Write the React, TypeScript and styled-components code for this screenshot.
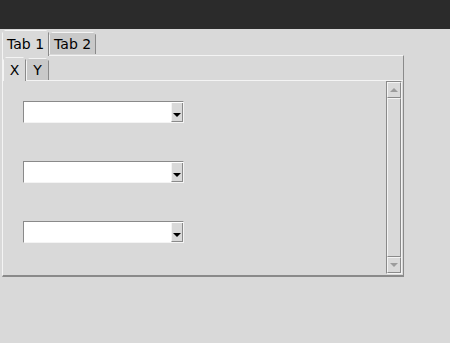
import { useState } from "react";
import { createGlobalStyle, styled } from "styled-components";

const GlobalStyle = createGlobalStyle`
  html, body {
    margin: 0;
    padding: 0;
    background: #d9d9d9;
    font-family: "DejaVu Sans", "Liberation Sans", sans-serif;
  }
`;

const outerTabs = ["Tab 1", "Tab 2"];
const innerTabs = ["X", "Y"];
const choices = [0, 1, 2];

export default function App() {
  const [outer, setOuter] = useState(0);
  const [inner, setInner] = useState(0);

  return (
    <>
      <GlobalStyle />
      <TitleBar />
      <Window>
        <TabBar>
          {outerTabs.map((t, i) => (
            <Tab key={t} $active={i === outer} onClick={() => setOuter(i)}>
              {t}
            </Tab>
          ))}
        </TabBar>
        <Panel>
          <InnerTabBar>
            {innerTabs.map((t, i) => (
              <InnerTab key={t} $active={i === inner} onClick={() => setInner(i)}>
                {t}
              </InnerTab>
            ))}
          </InnerTabBar>
          <InnerPanel>
            <ChoiceList>
              {choices.map((c) => (
                <Choice key={c}>
                  <ChoiceField />
                  <ChoiceButton>
                    <DownArrow />
                  </ChoiceButton>
                </Choice>
              ))}
            </ChoiceList>
            <Scrollbar>
              <ScrollButton>
                <ArrowUp />
              </ScrollButton>
              <ScrollTrack />
              <ScrollButton>
                <ArrowDown />
              </ScrollButton>
            </Scrollbar>
          </InnerPanel>
        </Panel>
      </Window>
    </>
  );
}

const TitleBar = styled.div`
  height: 29px;
  background: #2b2b2b;
`;

const Window = styled.div`
  padding: 1px 0 0 2px;
  width: 402px;
`;

const TabBar = styled.div`
  display: flex;
  align-items: flex-end;
  height: 25px;
`;

const Tab = styled.div<{ $active: boolean }>`
  box-sizing: border-box;
  height: ${(p) => (p.$active ? "26px" : "22px")};
  margin-bottom: ${(p) => (p.$active ? "-1px" : "1px")};
  padding: 0 4px;
  display: flex;
  align-items: center;
  font-size: 14px;
  color: #000;
  background: ${(p) => (p.$active ? "#d9d9d9" : "#c9c9c9")};
  border-top: 1px solid #f4f4f4;
  border-left: 1px solid #f4f4f4;
  border-right: 1px solid #8a8a8a;
  clip-path: polygon(3px 0, calc(100% - 3px) 0, 100% 3px, 100% 100%, 0 100%, 0 3px);
  position: relative;
  z-index: ${(p) => (p.$active ? 1 : 0)};
  cursor: default;
`;

const Panel = styled.div`
  box-sizing: border-box;
  height: 222px;
  border-top: 1px solid #f4f4f4;
  border-left: 1px solid #f4f4f4;
  border-right: 1px solid #8a8a8a;
  border-bottom: 2px solid #8a8a8a;
  padding: 1px 0 0 0;
  display: flex;
  flex-direction: column;
`;

const InnerTabBar = styled.div`
  display: flex;
  align-items: flex-end;
  height: 23px;
`;

const InnerTab = styled(Tab)`
  height: ${(p) => (p.$active ? "24px" : "22px")};
  margin-bottom: ${(p) => (p.$active ? "-1px" : "0")};
  padding: 0 5px;
  min-width: 23px;
  justify-content: center;
`;

const InnerPanel = styled.div`
  flex: 1;
  display: flex;
  justify-content: space-between;
  border-top: 1px solid #f4f4f4;
  padding: 0 1px 1px 20px;
`;

const ChoiceList = styled.div`
  display: flex;
  flex-direction: column;
  gap: 38px;
  padding-top: 20px;
`;

const Choice = styled.div`
  box-sizing: border-box;
  display: flex;
  width: 161px;
  height: 22px;
  border-top: 1px solid #8a8a8a;
  border-left: 1px solid #8a8a8a;
  border-bottom: 1px solid #f4f4f4;
  border-right: 1px solid #f4f4f4;
  background: #fff;
`;

const ChoiceField = styled.div`
  flex: 1;
`;

const ChoiceButton = styled.div`
  box-sizing: border-box;
  width: 12px;
  margin: 1px 0 0 0;
  background: #d9d9d9;
  border-right: 1px solid #8a8a8a;
  border-bottom: 1px solid #8a8a8a;
  border-left: 1px solid #f4f4f4;
  display: flex;
  align-items: flex-end;
  justify-content: center;
  padding-bottom: 4px;
`;

const DownArrow = styled.div`
  width: 0;
  height: 0;
  border-left: 4px solid transparent;
  border-right: 4px solid transparent;
  border-top: 4px solid #000;
`;

const Scrollbar = styled.div`
  box-sizing: border-box;
  width: 16px;
  display: flex;
  flex-direction: column;
  border: 1px solid #f4f4f4;
  border-top-color: #8a8a8a;
  border-left-color: #8a8a8a;
  background: #d9d9d9;
`;

const ScrollButton = styled.div`
  box-sizing: border-box;
  height: 16px;
  border-top: 1px solid #f4f4f4;
  border-left: 1px solid #f4f4f4;
  border-right: 1px solid #8a8a8a;
  border-bottom: 1px solid #8a8a8a;
  display: flex;
  align-items: center;
  justify-content: center;
`;

const ScrollTrack = styled.div`
  flex: 1;
  border-top: 1px solid #f4f4f4;
  border-left: 1px solid #f4f4f4;
  border-right: 1px solid #8a8a8a;
  border-bottom: 1px solid #8a8a8a;
`;

const ArrowUp = styled.div`
  width: 0;
  height: 0;
  border-left: 4px solid transparent;
  border-right: 4px solid transparent;
  border-bottom: 4px solid #9c9c9c;
`;

const ArrowDown = styled.div`
  width: 0;
  height: 0;
  border-left: 4px solid transparent;
  border-right: 4px solid transparent;
  border-top: 4px solid #9c9c9c;
`;
